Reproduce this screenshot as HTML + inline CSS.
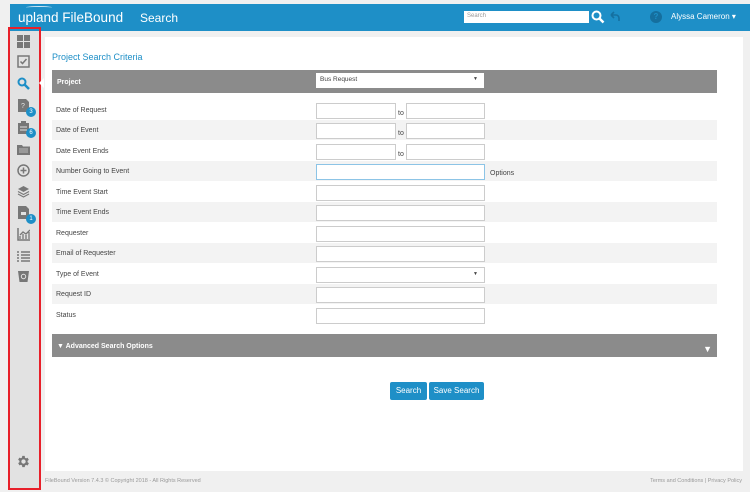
<!DOCTYPE html>
<html><head><style>
*{box-sizing:border-box;margin:0;padding:0}
body{width:750px;height:492px;background:#f0f0f0;font-family:"Liberation Sans",sans-serif;position:relative;overflow:hidden;color:#444}
.top{position:absolute;left:10px;top:4px;width:740px;height:27px;background:#1e8fc7}
.logo{position:absolute;left:18px;top:10px;color:#fff;font-size:13.5px}
.title{position:absolute;left:140px;top:11px;color:#fff;font-size:12px}
.side{position:absolute;left:10px;top:31px;width:30px;height:459px;background:#e2e2e2}
.red{position:absolute;left:8px;top:27px;width:33px;height:463px;border:2px solid #e8202a}
.panel{position:absolute;left:45px;top:37px;width:698px;height:434px;background:#fff}
.ic{position:absolute;left:17px;width:13px;height:13px}
.badge{position:absolute;width:10px;height:10px;border-radius:50%;background:#1e8fc7;color:#fff;font-size:6px;text-align:center;line-height:10px}
.row{position:absolute;left:52px;width:665px;height:20px;font-size:7px;line-height:22px;padding-left:4px}
.row.g{background:#f3f3f3}
.in{position:absolute;height:16px;border:1px solid #ccc;background:#fff}
.to{position:absolute;font-size:7px}
.bar{position:absolute;left:52px;width:665px;background:#8b8b8b;color:#fff;font-size:7px;font-weight:bold}
.btn{position:absolute;top:382px;height:18px;background:#1e8fc7;color:#fff;font-size:8px;line-height:18px;text-align:center;border-radius:2px}
</style></head><body>
<div class="top"></div>
<div class="logo">upland FileBound</div>
<div style="position:absolute;left:26px;top:6px;width:26px;height:3px;border-top:1px solid #cfe8f5;border-radius:50%"></div>
<div class="title">Search</div>
<div style="position:absolute;left:464px;top:11px;width:125px;height:12px;background:#fff;font-size:6px;color:#999;padding:2px 3px">Search</div>
<svg style="position:absolute;left:591px;top:10px" width="14" height="14" viewBox="0 0 14 14"><circle cx="5.5" cy="5.5" r="4" fill="none" stroke="#fff" stroke-width="2"/><path d="M8.5 8.5L12.5 12.5" stroke="#fff" stroke-width="2.5"/></svg>
<svg style="position:absolute;left:608px;top:11px" width="12" height="12" viewBox="0 0 12 12"><path d="M3 4h5a3 3 0 0 1 3 3v3M3 4l3-3M3 4l3 3" fill="none" stroke="#1570a0" stroke-width="1.6"/></svg>
<div style="position:absolute;left:650px;top:11px;width:12px;height:12px;border-radius:50%;background:#156f9e;color:#1e8fc7;font-size:8px;text-align:center;line-height:12px;font-weight:bold">?</div>
<div style="position:absolute;left:671px;top:12px;color:#fff;font-size:8px">Alyssa Cameron ▾</div>
<div class="side"></div>
<div class="red"></div>
<svg class="ic" style="top:35px" viewBox="0 0 13 13"><rect x="0" y="0" width="6" height="6" fill="#777"/><rect x="7" y="0" width="6" height="6" fill="#777"/><rect x="0" y="7" width="6" height="6" fill="#777"/><rect x="7" y="7" width="6" height="6" fill="#777"/></svg>
<svg class="ic" style="top:55px" viewBox="0 0 13 13"><rect x="1" y="1" width="11" height="11" fill="none" stroke="#777" stroke-width="1.5"/><path d="M3.5 6.5l2 2 4-4.5" fill="none" stroke="#777" stroke-width="1.5"/></svg>
<svg class="ic" style="top:77px" viewBox="0 0 13 13"><circle cx="5" cy="5" r="3.5" fill="none" stroke="#1e8fc7" stroke-width="2"/><path d="M7.5 7.5L12 12" stroke="#1e8fc7" stroke-width="2.5"/></svg>
<div style="position:absolute;left:34px;top:78px;border:5px solid transparent;border-right-color:#fff"></div>
<svg class="ic" style="top:99px" viewBox="0 0 13 13"><path d="M1 0h8l3 3v10H1z" fill="#777"/><text x="4" y="9" font-size="7" fill="#e2e2e2">?</text></svg>
<div class="badge" style="left:26px;top:107px">3</div>
<svg class="ic" style="top:121px" viewBox="0 0 13 13"><rect x="1" y="2" width="11" height="11" fill="#777"/><rect x="4" y="0" width="5" height="3" fill="#777"/><path d="M3 6h7M3 9h7" stroke="#e2e2e2"/></svg>
<div class="badge" style="left:26px;top:128px">6</div>
<svg class="ic" style="top:143px" viewBox="0 0 13 13"><path d="M0 2h5l1 1.5h7V12H0z" fill="#777"/><rect x="2" y="5" width="9" height="5" fill="#999"/></svg>
<svg class="ic" style="top:164px" viewBox="0 0 13 13"><circle cx="6.5" cy="6.5" r="5.5" fill="none" stroke="#777" stroke-width="1.5"/><path d="M6.5 3.5v6M3.5 6.5h6" stroke="#777" stroke-width="1.5"/></svg>
<svg class="ic" style="top:185px" viewBox="0 0 13 13"><path d="M6.5 1L12 4 6.5 7 1 4z" fill="#777"/><path d="M1 6.5l5.5 3 5.5-3M1 9l5.5 3 5.5-3" fill="none" stroke="#777" stroke-width="1.2"/></svg>
<svg class="ic" style="top:206px" viewBox="0 0 13 13"><path d="M1 0h8l3 3v10H1z" fill="#777"/><rect x="4" y="6" width="5" height="3" fill="#e2e2e2"/></svg>
<div class="badge" style="left:26px;top:214px">1</div>
<svg class="ic" style="top:228px" viewBox="0 0 13 13"><path d="M1 0v12h12" fill="none" stroke="#777" stroke-width="1.5"/><path d="M3 11V8M6 11V6M9 11V7M12 11V4M3 7l3-3 3 2 4-4" stroke="#777" stroke-width="1.3" fill="none"/></svg>
<svg class="ic" style="top:250px" viewBox="0 0 13 13"><path d="M0 2h2M4 2h9M0 5h2M4 5h9M0 8h2M4 8h9M0 11h2M4 11h9" stroke="#777" stroke-width="1.6"/></svg>
<svg class="ic" style="top:270px" viewBox="0 0 13 13"><path d="M1 1h11l-1.5 11h-8z" fill="#777"/><circle cx="6.5" cy="6.5" r="2.2" fill="none" stroke="#e2e2e2"/></svg>
<svg style="position:absolute;left:16px;top:454px" width="15" height="15" viewBox="0 0 24 24"><path fill="#777" d="M19.4 13a7.5 7.5 0 0 0 0-2l2.1-1.6-2-3.5-2.5 1a7 7 0 0 0-1.7-1L15 3h-4l-.4 2.7a7 7 0 0 0-1.7 1l-2.5-1-2 3.5L6.6 11a7.5 7.5 0 0 0 0 2l-2.1 1.6 2 3.5 2.5-1a7 7 0 0 0 1.7 1L11 21h4l.4-2.7a7 7 0 0 0 1.7-1l2.5 1 2-3.5zM13 15.5a3.5 3.5 0 1 1 0-7 3.5 3.5 0 0 1 0 7z" transform="translate(-1 0)"/></svg>
<div class="panel"></div>
<div style="position:absolute;left:52px;top:52px;color:#1e8fc7;font-size:9px">Project Search Criteria</div>
<div class="bar" style="top:70px;height:23px;line-height:26px;padding-left:5px">Project</div>
<div style="position:absolute;left:316px;top:73px;width:168px;height:15px;background:#fff;font-size:6.5px;padding:3px 4px">Bus Request<span style="position:absolute;right:6px;font-size:5px">▼</span></div>

<div class="row" style="top:100px">Date of Request</div>
<div class="row g" style="top:120px">Date of Event</div>
<div class="row" style="top:141px">Date Event Ends</div>
<div class="row g" style="top:161px">Number Going to Event</div>
<div class="row" style="top:182px">Time Event Start</div>
<div class="row g" style="top:202px">Time Event Ends</div>
<div class="row" style="top:223px">Requester</div>
<div class="row g" style="top:243px">Email of Requester</div>
<div class="row" style="top:264px">Type of Event</div>
<div class="row g" style="top:284px">Request ID</div>
<div class="row" style="top:305px">Status</div>

<div class="in" style="left:316px;top:103px;width:80px"></div><div class="to" style="left:398px;top:110px">to</div><div class="in" style="left:406px;top:103px;width:79px"></div>
<div class="in" style="left:316px;top:123px;width:80px"></div><div class="to" style="left:398px;top:130px">to</div><div class="in" style="left:406px;top:123px;width:79px"></div>
<div class="in" style="left:316px;top:144px;width:80px"></div><div class="to" style="left:398px;top:151px">to</div><div class="in" style="left:406px;top:144px;width:79px"></div>
<div class="in" style="left:316px;top:164px;width:169px;border-color:#8cc4e6"></div><div class="to" style="left:490px;top:170px">Options</div>
<div class="in" style="left:316px;top:185px;width:169px"></div>
<div class="in" style="left:316px;top:205px;width:169px"></div>
<div class="in" style="left:316px;top:226px;width:169px"></div>
<div class="in" style="left:316px;top:246px;width:169px"></div>
<div class="in" style="left:316px;top:267px;width:169px"><span style="position:absolute;right:6px;top:3px;font-size:5px">▼</span></div>
<div class="in" style="left:316px;top:287px;width:169px"></div>
<div class="in" style="left:316px;top:308px;width:169px"></div>

<div class="bar" style="top:334px;height:23px;line-height:26px;padding-left:5px">▼ Advanced Search Options<span style="position:absolute;right:5px;top:2px;font-size:9px">▼</span></div>
<div class="btn" style="left:390px;width:37px">Search</div>
<div class="btn" style="left:429px;width:55px">Save Search</div>
<div style="position:absolute;left:45px;top:478px;font-size:5.5px;color:#999">FileBound Version 7.4.3 © Copyright 2018 - All Rights Reserved</div>
<div style="position:absolute;right:8px;top:478px;font-size:5.5px;color:#999">Terms and Conditions | Privacy Policy</div>
</body></html>
